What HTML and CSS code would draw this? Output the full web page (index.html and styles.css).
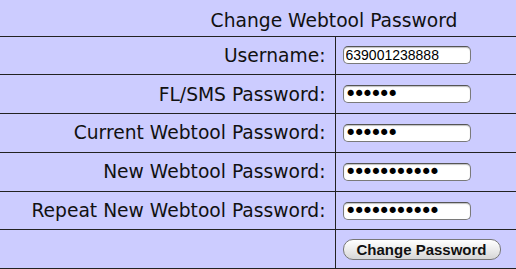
FILE: index.html
```html
<!DOCTYPE html>
<html lang="en">
<head>
  <meta charset="UTF-8" />
  <title>Change Webtool Password</title>
  <link rel="stylesheet" href="styles.css">
</head>
<body>
  <form class="pw-form">
    <table class="pw-table">
      <tr>
        <th colspan="2" class="title">Change Webtool Password</th>
      </tr>
      <tr>
        <td class="label">Username:</td>
        <td class="field"><input type="text" class="box" value="639001238888" /></td>
      </tr>
      <tr>
        <td class="label">FL/SMS Password:</td>
        <td class="field"><input type="password" class="box secret" value="secret" /></td>
      </tr>
      <tr>
        <td class="label">Current Webtool Password:</td>
        <td class="field"><input type="password" class="box secret" value="webpw1" /></td>
      </tr>
      <tr>
        <td class="label">New Webtool Password:</td>
        <td class="field"><input type="password" class="box secret" value="newpassword" /></td>
      </tr>
      <tr>
        <td class="label">Repeat New Webtool Password:</td>
        <td class="field"><input type="password" class="box secret" value="newpassword" /></td>
      </tr>
      <tr>
        <td class="label"></td>
        <td class="field"><button type="submit" class="btn">Change Password</button></td>
      </tr>
    </table>
  </form>
</body>
</html>
```

FILE: styles.css
```css
* { box-sizing: border-box; }
html, body { margin: 0; padding: 0; background: #ccccff; overflow: hidden; }
body { font-family: "DejaVu Sans", Verdana, sans-serif; font-size: 18.7px; color: #111; }
.pw-form { margin: 0; }
.pw-table { width: 668px; border-collapse: collapse; border-spacing: 0; }
.pw-table td, .pw-table th { padding: 0; border-bottom: 1px solid #222; }
.title { font-weight: normal; text-align: center; height: 36px; padding-top: 5px !important; }
.label { width: 335px; height: 38.8px; text-align: right; padding-right: 9px !important; border-right: 1px solid #222; }
.field { padding-left: 7px !important; }
.box { display: block; width: 128px; height: 18px; margin: 0; padding: 0 2px; border: 1px solid #7a7a7a; border-top-color: #555; border-radius: 5px; background: #fff; box-shadow: inset 0 1px 1px rgba(0,0,0,0.25); font-family: "Liberation Sans", Arial, sans-serif; font-size: 14px; color: #000; outline: none; }
.secret { font-family: "DejaVu Sans", sans-serif; font-size: 21px; letter-spacing: -4px; padding-left: 1px; }
.btn { display: block; width: 158px; height: 21px; margin: 0; padding: 0; border: 1px solid #777; border-radius: 10px; background: linear-gradient(#ffffff, #ececec 50%, #d6d6d6); font-family: "Liberation Sans", Arial, sans-serif; font-size: 15px; font-weight: bold; color: #111; }
```
